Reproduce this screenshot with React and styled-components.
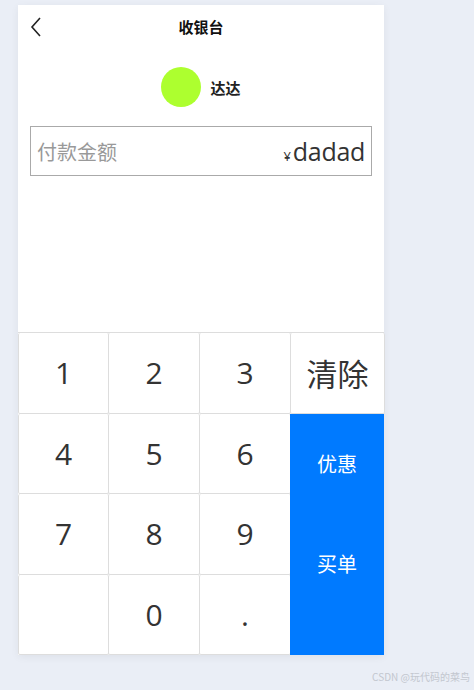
import React from "react";
import styled, { createGlobalStyle } from "styled-components";

const Global = createGlobalStyle`
  html, body {
    margin: 0;
    padding: 0;
    background: #eaeef6;
    font-family: "Noto Sans", "Noto Sans CJK SC", sans-serif;
  }
`;

const Page = styled.div`
  width: 474px;
  height: 690px;
  padding: 5px 0 0 18px;
  box-sizing: border-box;
  position: relative;
`;

const Phone = styled.div`
  width: 366px;
  height: 650px;
  background: #fff;
  box-shadow: 0 2px 8px rgba(0, 0, 0, 0.06);
  display: flex;
  flex-direction: column;
`;

const Header = styled.div`
  height: 42px;
  display: flex;
  align-items: center;
  justify-content: center;
  position: relative;
`;

const Back = styled.svg`
  position: absolute;
  left: 12px;
  top: 12px;
`;

const Title = styled.h1`
  margin: 0;
  font-size: 15px;
  font-weight: 700;
  color: #111;
  font-family: "Noto Sans CJK SC", sans-serif;
`;

const User = styled.div`
  display: flex;
  align-items: center;
  justify-content: center;
  gap: 9px;
  margin-top: 20px;
`;

const Avatar = styled.div`
  width: 40px;
  height: 40px;
  border-radius: 50%;
  background: #adff2f;
`;

const Name = styled.span`
  font-size: 15px;
  font-weight: 700;
  color: #222;
  font-family: "Noto Sans CJK SC", sans-serif;
`;

const AmountBox = styled.div`
  margin: 19px 12px 0;
  height: 50px;
  border: 1px solid #aaa;
  box-sizing: border-box;
  display: flex;
  align-items: center;
  justify-content: space-between;
  padding: 0 6px;
`;

const Placeholder = styled.span`
  font-size: 20px;
  color: #999;
  font-family: "Noto Sans CJK SC", sans-serif;
`;

const Amount = styled.span`
  display: flex;
  align-items: baseline;
  color: #333;
  font-family: "Open Sans", sans-serif;
`;

const Yen = styled.span`
  font-size: 13px;
  margin-right: 2px;
`;

const Value = styled.span`
  font-size: 25px;
  letter-spacing: -0.3px;
`;

const Keypad = styled.div`
  margin-top: auto;
  height: 322px;
  display: grid;
  grid-template-columns: 90px 91px 91px 94px;
  grid-template-rows: repeat(4, 1fr);
  border-top: 1px solid #ddd;
`;

const Key = styled.button`
  all: unset;
  box-sizing: border-box;
  display: flex;
  align-items: center;
  justify-content: center;
  border: 1px solid #ddd;
  border-top: none;
  margin-right: -1px;
  border-radius: 2px;
  background: #fff;
  color: #333;
  font-size: ${(p) => (p.$cn ? "31px" : "30px")};
  font-family: ${(p) =>
    p.$cn ? '"Noto Sans CJK SC", sans-serif' : '"Open Sans", sans-serif'};
`;

const BlueColumn = styled.div`
  grid-column: 4;
  grid-row: 2 / span 3;
  background: #007aff;
  display: flex;
  flex-direction: column;
`;

const BlueKey = styled.button`
  all: unset;
  height: 100px;
  display: flex;
  align-items: center;
  justify-content: center;
  color: #fff;
  font-size: 20px;
  font-family: "Noto Sans CJK SC", sans-serif;
`;

const Mark = styled.span`
  position: absolute;
  right: 4px;
  bottom: 6px;
  font-size: 10px;
  color: #c3c7cf;
  font-family: "Noto Sans CJK SC", sans-serif;
`;

export default function App() {
  const rows = [
    ["1", "2", "3"],
    ["4", "5", "6"],
    ["7", "8", "9"],
    ["", "0", "."],
  ];
  return (
    <Page>
      <Global />
      <Phone>
        <Header>
          <Back width="12" height="20" viewBox="0 0 12 20">
            <path d="M10 1 L2 10 L10 19" fill="none" stroke="#222" strokeWidth="1.6" />
          </Back>
          <Title>收银台</Title>
        </Header>
        <User>
          <Avatar />
          <Name>达达</Name>
        </User>
        <AmountBox>
          <Placeholder>付款金额</Placeholder>
          <Amount>
            <Yen>¥</Yen>
            <Value>dadad</Value>
          </Amount>
        </AmountBox>
        <Keypad>
          {rows.map((r, i) => (
            <React.Fragment key={i}>
              {r.map((k, j) => (
                <Key key={j} style={{ gridRow: i + 1, gridColumn: j + 1 }}>
                  {k}
                </Key>
              ))}
              {i === 0 && (
                <Key $cn style={{ gridRow: 1, gridColumn: 4 }}>
                  清除
                </Key>
              )}
            </React.Fragment>
          ))}
          <BlueColumn>
            <BlueKey>优惠</BlueKey>
            <BlueKey>买单</BlueKey>
          </BlueColumn>
        </Keypad>
      </Phone>
      <Mark>CSDN @玩代码的菜鸟</Mark>
    </Page>
  );
}
